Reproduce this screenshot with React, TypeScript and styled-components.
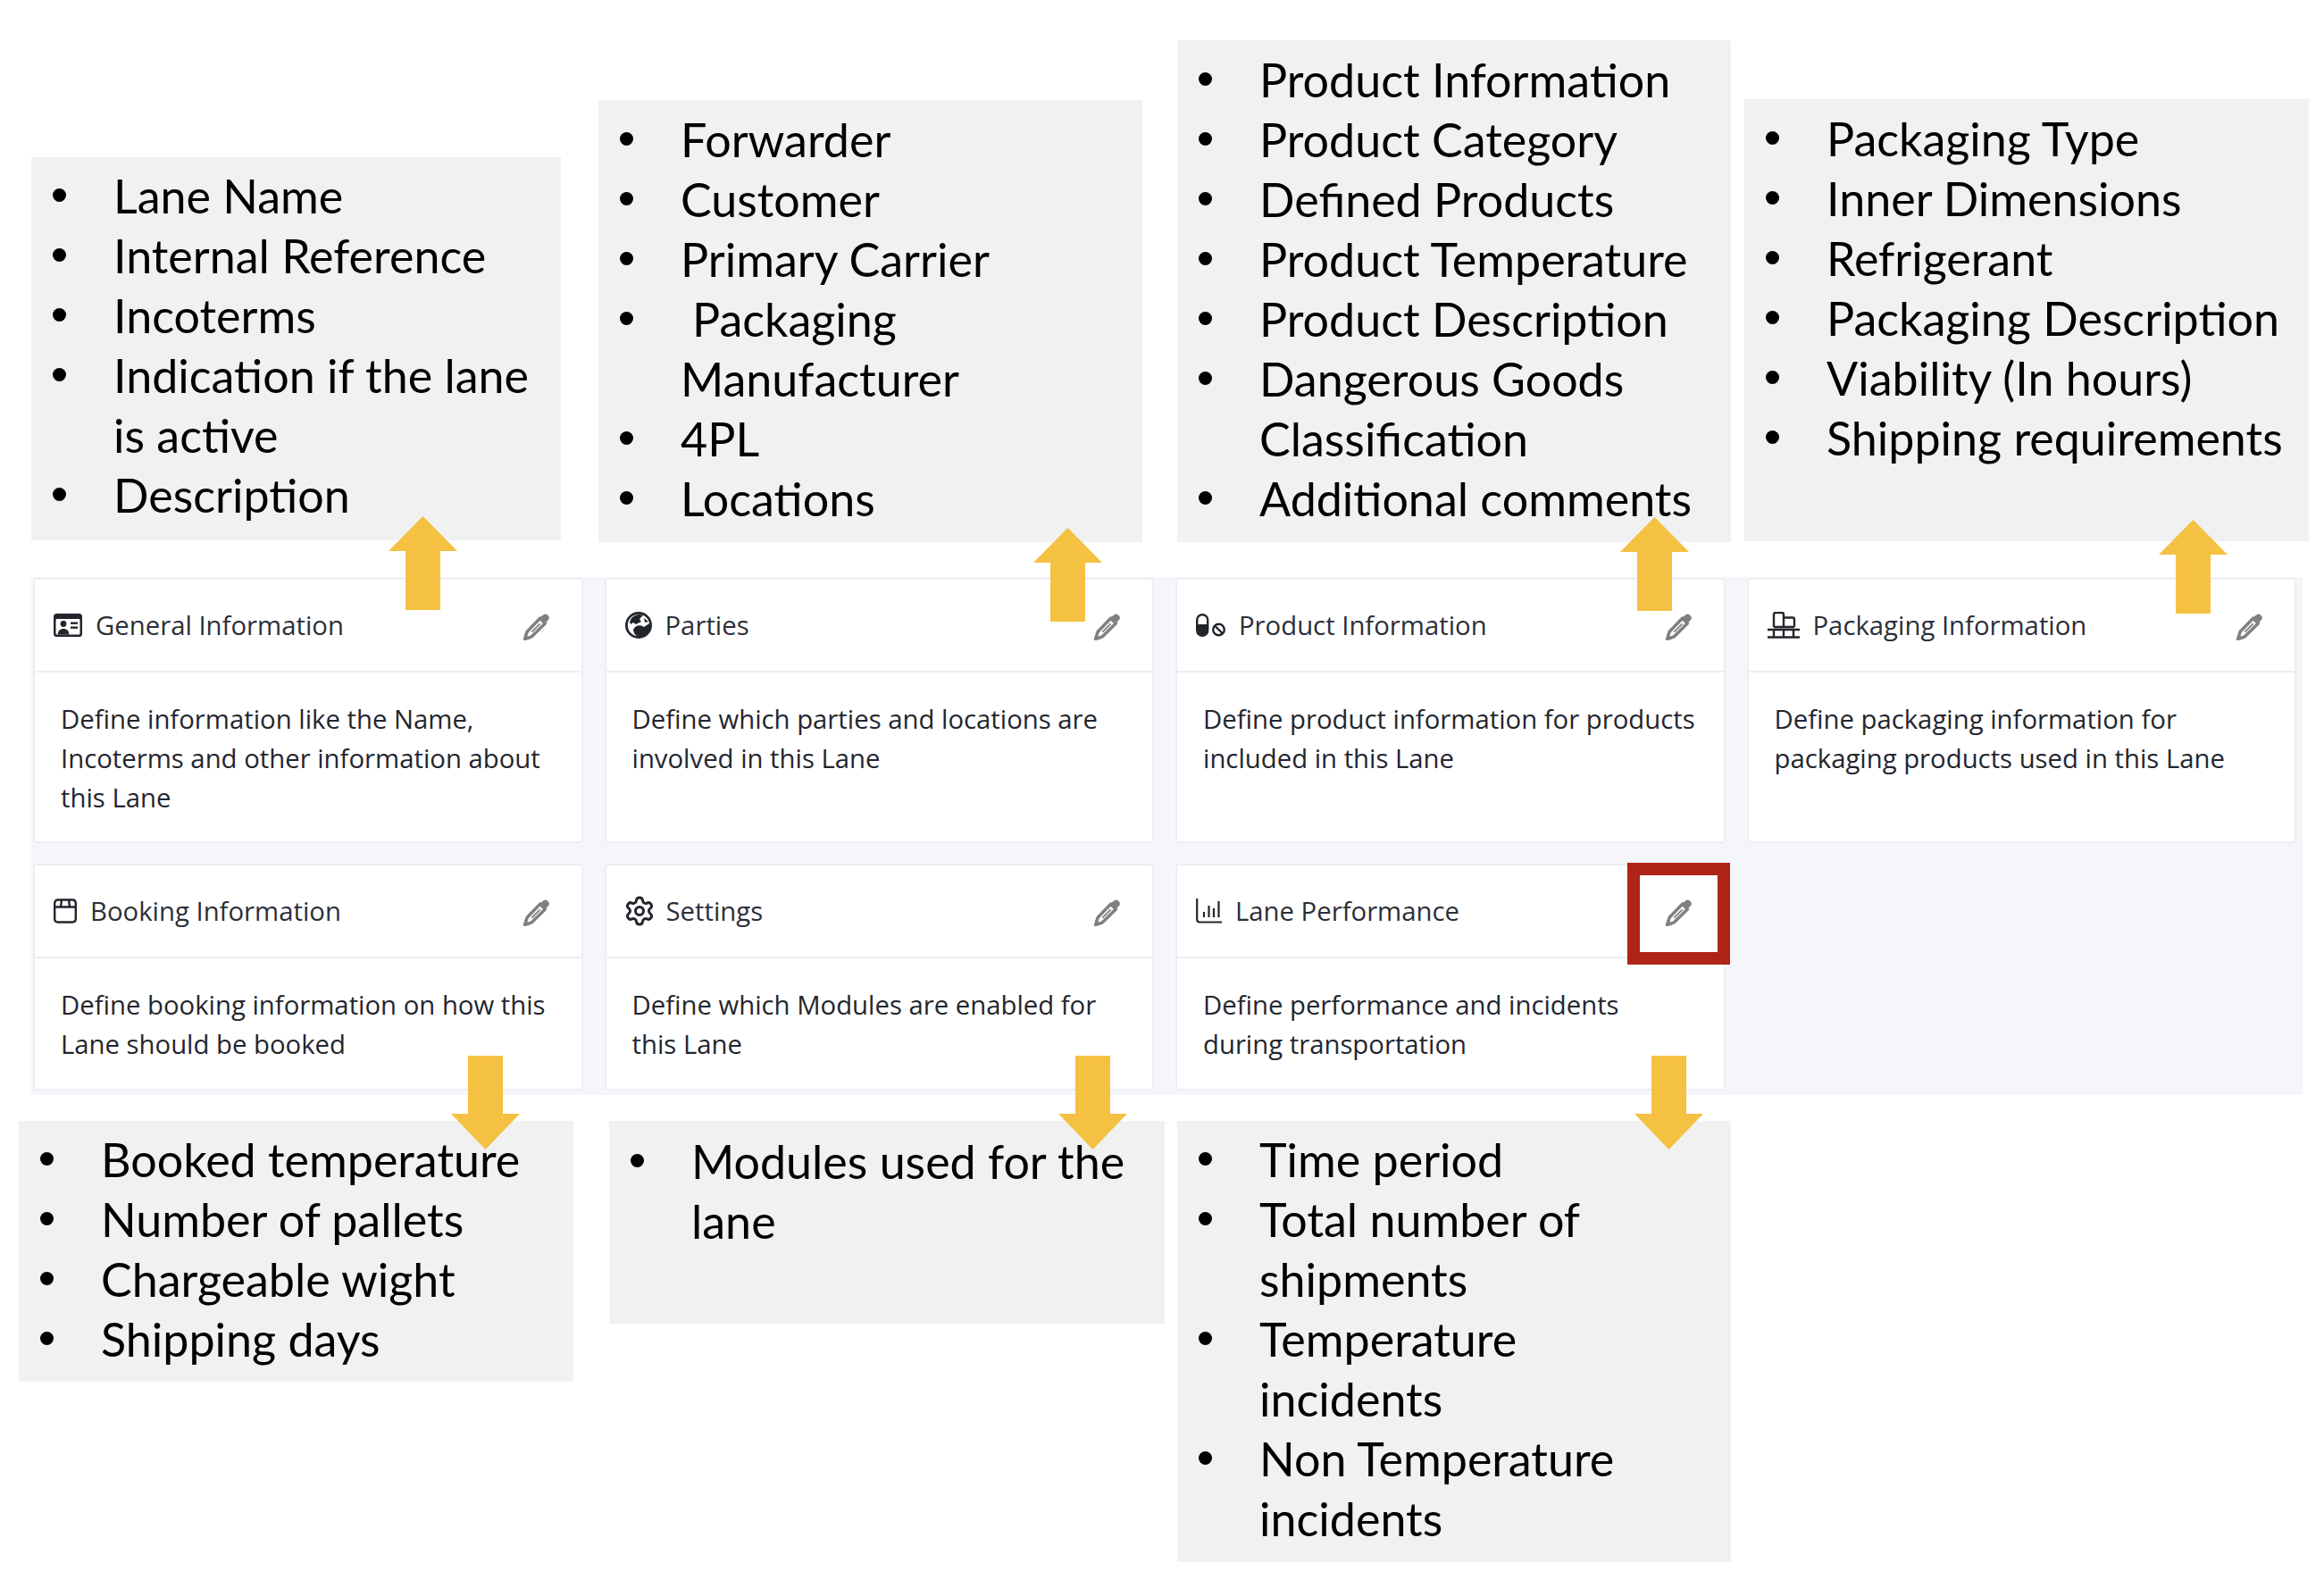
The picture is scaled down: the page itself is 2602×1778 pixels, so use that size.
import { ReactNode } from 'react'
import styled, { createGlobalStyle } from 'styled-components'
import { Settings } from 'lucide-react'

const GlobalStyle = createGlobalStyle`
  html, body {
    margin: 0;
    padding: 0;
    background: #ffffff;
  }
`

const Page = styled.div`
  position: relative;
  display: flex;
  flex-direction: column;
  width: 2602px;
  height: 1778px;
  padding-top: 45px;
  box-sizing: border-box;
  overflow: hidden;
  background: #ffffff;
`

const CalloutRow = styled.div<{ $align: string; $marginTop: number }>`
  display: flex;
  align-items: ${({ $align }) => $align};
  margin-top: ${({ $marginTop }) => $marginTop}px;
`

const Callout = styled.div<{ $left: number; $width: number; $height: number; $pad: number; $lift?: number }>`
  flex-shrink: 0;
  box-sizing: border-box;
  width: ${({ $width }) => $width}px;
  height: ${({ $height }) => $height}px;
  margin-left: ${({ $left }) => $left}px;
  margin-bottom: ${({ $lift }) => $lift || 0}px;
  padding-top: ${({ $pad }) => $pad}px;
  background: #f1f1f1;
`

const BulletList = styled.ul<{ $narrow?: boolean }>`
  margin: 0;
  padding: 0 ${({ $narrow }) => ($narrow ? 30 : 10)}px 0 92px;
  list-style: none;
  font-family: 'Lato', 'Open Sans', sans-serif;
  font-size: 52px;
  line-height: 67px;
  color: #000000;
`

const Bullet = styled.li<{ $indent?: boolean }>`
  position: relative;
  text-indent: ${({ $indent }) => ($indent ? 13 : 0)}px;

  &::before {
    content: '';
    position: absolute;
    left: -68px;
    top: 25px;
    width: 15px;
    height: 15px;
    border-radius: 50%;
    background: #000000;
  }
`

const Panel = styled.div`
  display: grid;
  grid-template-columns: repeat(4, 615.5px);
  grid-template-rows: 297px 254px;
  column-gap: 24px;
  row-gap: 23px;
  box-sizing: border-box;
  width: 2543px;
  height: 580px;
  margin: 39px 0 0 35px;
  padding: 1px 0 0 2px;
  background: #f5f6fa;
`

const Card = styled.section`
  position: relative;
  display: flex;
  flex-direction: column;
  box-sizing: border-box;
  border: 2px solid #eceef2;
  border-radius: 4px;
  background: #ffffff;
`

const CardHeader = styled.header`
  display: flex;
  align-items: center;
  flex-shrink: 0;
  gap: 15px;
  box-sizing: border-box;
  height: 104px;
  padding: 0 35px 1px 21px;
  border-bottom: 2px solid #eceef2;
`

const CardTitle = styled.h3`
  flex: 1;
  margin: 0;
  font-family: 'Open Sans', sans-serif;
  font-size: 29.3px;
  font-weight: 400;
  color: #2b2f38;
`

const CardText = styled.p`
  margin: 0;
  padding: 29.5px 24px 0 29px;
  font-family: 'Open Sans', sans-serif;
  font-size: 29.3px;
  line-height: 44px;
  color: #23262e;
`

const Highlight = styled.div`
  position: absolute;
  top: -3px;
  left: 504px;
  box-sizing: border-box;
  width: 115px;
  height: 114px;
  border: 14px solid #ae2417;
  pointer-events: none;
`

const IconSvg = styled.svg`
  flex-shrink: 0;
  color: #22252c;
`

const GearIcon = styled(Settings)`
  flex-shrink: 0;
  width: 36px;
  height: 36px;
  margin: 0 -3px 0 -2px;
  color: #22252c;
`

const ArrowSvg = styled.svg<{ $x: number; $y: number }>`
  position: absolute;
  left: ${({ $x }) => $x}px;
  top: ${({ $y }) => $y}px;
  width: 77px;
  height: 105px;
  fill: #f4c142;
`

const PencilSvg = styled.svg`
  flex-shrink: 0;
  width: 31px;
  height: 31px;
  margin-top: 4px;
`

const IdCardIcon = () => (
  <IconSvg width='32' height='26' viewBox='0 0 32 26'>
    <rect width='32' height='26' rx='3.5' fill='currentColor' />
    <rect x='2.5' y='6' width='27' height='17.5' rx='1' fill='#fff' />
    <circle cx='11' cy='11.5' r='3.4' fill='currentColor' />
    <path d='M4.5 23.5c.4-4.6 3-6.6 6.5-6.6s6.100 2 6.500 6.600z' fill='currentColor' />
    <rect x='19' y='9.500' width='8' height='2.400' fill='currentColor' />
    <rect x='19' y='14.500' width='8' height='2.400' fill='currentColor' />
  </IconSvg>
)

const GlobeIcon = () => (
  <IconSvg width='30' height='30' viewBox='0 0 30 30'>
    <circle cx='15' cy='15' r='13.600' fill='#fff' stroke='currentColor' strokeWidth='2.800' />
    <path d='M7 7c4-4 9-5 13-3l-4 4 2 3-6 3-3-2-3 2-1-3z' fill='currentColor' />
    <path d='M9 20c2-5 8-6 12-3l6-4 1 4c-1 7-7 12-14 11-3-2-5-5-5-8z' fill='currentColor' />
    <path d='M21 7l5 4-4 1z' fill='currentColor' />
  </IconSvg>
)

const PillBanIcon = () => (
  <IconSvg width='33' height='26' viewBox='0 0 33 26'>
    <rect x='1.200' y='1.200' width='12' height='23.600' rx='6' fill='none' stroke='currentColor' strokeWidth='2.400' />
    <path d='M1.200 12h12v6.800a6 6 0 0 1-12 0z' fill='currentColor' />
    <circle cx='25.500' cy='18' r='6.300' fill='none' stroke='currentColor' strokeWidth='2.400' />
    <path d='M21 13.500l9 9' stroke='currentColor' strokeWidth='2.400' />
  </IconSvg>
)

const PalletIcon = () => (
  <IconSvg width='36' height='30' viewBox='0 0 36 30' fill='none' stroke='currentColor' strokeWidth='2.400'>
    <path d='M7 17V3q0-2 2-2h7q2 0 2 2v14' />
    <path d='M18 6.500h10q2 0 2 2V17' />
    <path d='M7 17h23M0 20h36M0 28.500h36M7 20v8.500M18 20v8.500M29 20v8.500' />
  </IconSvg>
)

const BoxIcon = () => (
  <IconSvg width='26' height='28' viewBox='0 0 26 28' fill='none' stroke='currentColor' strokeWidth='2.400'>
    <path d='M5 1.500h16q3.800 0 3.800 4v17q0 4-3.800 4H5q-3.800 0-3.800-4v-17q0-4 3.800-4z' />
    <path d='M1.200 9.500h23.600M9 1.500l-1 8M17 1.500l1 8' />
  </IconSvg>
)

const ChartIcon = () => (
  <IconSvg width='29' height='28' viewBox='0 0 29 28' fill='none' stroke='currentColor' strokeWidth='2.200'>
    <path d='M1.200 0v23.500q0 3 3 3H29' />
    <path d='M9 15v6M14.500 8v13M20 11v10M25.500 3v18' />
  </IconSvg>
)

const Pencil = () => (
  <PencilSvg viewBox='0 0 30 30'>
    <path d='M22.500 2.500q2-2 4-.500l2 2q1.500 2-.500 4L25 11l-6-6z' fill='#808080' />
    <path d='M19 6l5.500 5.500L10 26l-7.500 2.500L5 20.500z' fill='none' stroke='#808080' strokeWidth='3.400' strokeLinejoin='round' />
    <path d='M1.500 29.500l1-6.500 5.500 5.500z' fill='#808080' />
    <path d='M10 21l9-9' stroke='#808080' strokeWidth='1.800' />
  </PencilSvg>
)

const UpArrow = ({ x, y }: { x: number; y: number }) => (
  <ArrowSvg $x={x} $y={y} viewBox='0 0 77 105'>
    <path d='M38.500 0L77 39H58V105H19V39H0z' />
  </ArrowSvg>
)

const DownArrow = ({ x, y }: { x: number; y: number }) => (
  <ArrowSvg $x={x} $y={y} viewBox='0 0 77 105'>
    <path d='M19 0H58V65H77L38.500 105 0 65H19z' />
  </ArrowSvg>
)

type CardInfo = { icon: ReactNode; title: string; text: string; highlighted?: boolean }

const cards: CardInfo[] = [
  { icon: <IdCardIcon />, title: 'General Information', text: 'Define information like the Name, Incoterms and other information about this Lane' },
  { icon: <GlobeIcon />, title: 'Parties', text: 'Define which parties and locations are involved in this Lane' },
  { icon: <PillBanIcon />, title: 'Product Information', text: 'Define product information for products included in this Lane' },
  { icon: <PalletIcon />, title: 'Packaging Information', text: 'Define packaging information for packaging products used in this Lane' },
  { icon: <BoxIcon />, title: 'Booking Information', text: 'Define booking information on how this Lane should be booked' },
  { icon: <GearIcon />, title: 'Settings', text: 'Define which Modules are enabled for this Lane' },
  { icon: <ChartIcon />, title: 'Lane Performance', text: 'Define performance and incidents during transportation', highlighted: true },
]

const App = () => (
  <Page>
    <GlobalStyle />

    {/* 上排说明 */}
    <CalloutRow $align='flex-end' $marginTop={0}>
      <Callout $left={35} $width={593} $height={429} $pad={10} $lift={2}>
        <BulletList>
          <Bullet>Lane Name</Bullet>
          <Bullet>Internal Reference</Bullet>
          <Bullet>Incoterms</Bullet>
          <Bullet>Indication if the lane is active</Bullet>
          <Bullet>Description</Bullet>
        </BulletList>
      </Callout>
      <Callout $left={42} $width={609} $height={495} $pad={11}>
        <BulletList>
          <Bullet>Forwarder</Bullet>
          <Bullet>Customer</Bullet>
          <Bullet>Primary Carrier</Bullet>
          <Bullet $indent>Packaging Manufacturer</Bullet>
          <Bullet>4PL</Bullet>
          <Bullet>Locations</Bullet>
        </BulletList>
      </Callout>
      <Callout $left={39} $width={620} $height={562} $pad={11}>
        <BulletList>
          <Bullet>Product Information</Bullet>
          <Bullet>Product Category</Bullet>
          <Bullet>Defined Products</Bullet>
          <Bullet>Product Temperature</Bullet>
          <Bullet>Product Description</Bullet>
          <Bullet>Dangerous Goods Classification</Bullet>
          <Bullet>Additional comments</Bullet>
        </BulletList>
      </Callout>
      <Callout $left={15} $width={632} $height={495} $pad={11} $lift={1}>
        <BulletList>
          <Bullet>Packaging Type</Bullet>
          <Bullet>Inner Dimensions</Bullet>
          <Bullet>Refrigerant</Bullet>
          <Bullet>Packaging Description</Bullet>
          <Bullet>Viability (In hours)</Bullet>
          <Bullet>Shipping requirements</Bullet>
        </BulletList>
      </Callout>
    </CalloutRow>

    <Panel>
      {cards.map(card => (
        <Card key={card.title}>
          <CardHeader>
            {card.icon}
            <CardTitle>{card.title}</CardTitle>
            <Pencil />
          </CardHeader>
          <CardText>{card.text}</CardText>
          {card.highlighted && <Highlight />}
        </Card>
      ))}
    </Panel>

    {/* 下排说明 */}
    <CalloutRow $align='flex-start' $marginTop={29}>
      <Callout $left={21} $width={621} $height={292} $pad={10}>
        <BulletList>
          <Bullet>Booked temperature</Bullet>
          <Bullet>Number of pallets</Bullet>
          <Bullet>Chargeable wight</Bullet>
          <Bullet>Shipping days</Bullet>
        </BulletList>
      </Callout>
      <Callout $left={40} $width={622} $height={227} $pad={12}>
        <BulletList>
          <Bullet>Modules used for the lane</Bullet>
        </BulletList>
      </Callout>
      <Callout $left={14} $width={620} $height={494} $pad={10}>
        <BulletList $narrow>
          <Bullet>Time period</Bullet>
          <Bullet>Total number of shipments</Bullet>
          <Bullet>Temperature incidents</Bullet>
          <Bullet>Non Temperature incidents</Bullet>
        </BulletList>
      </Callout>
    </CalloutRow>

    <UpArrow x={435} y={578} />
    <UpArrow x={1157} y={591} />
    <UpArrow x={1814} y={579} />
    <UpArrow x={2417} y={582} />
    <DownArrow x={505} y={1182} />
    <DownArrow x={1185} y={1182} />
    <DownArrow x={1830} y={1182} />
  </Page>
)

export default App
